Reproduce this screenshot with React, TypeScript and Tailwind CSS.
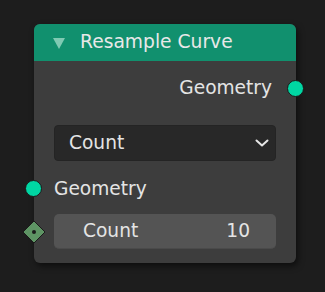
export default function App() {
  return (
    <div
      className="w-[325px] h-[292px] bg-[#1d1d1d] pt-[24px] pl-[34px] overflow-hidden"
      style={{ fontFamily: '"DejaVu Sans", "Liberation Sans", sans-serif' }}
    >
      <div className="relative w-[262px] h-[239px] rounded-[6px] bg-[#3d3d3d] shadow-[2px_3px_6px_rgba(0,0,0,0.55)] flex flex-col">
        {/* header */}
        <div className="h-[37px] rounded-t-[6px] bg-[#11906e] flex items-center pl-[19px] gap-[15px] shrink-0">
          <svg width="12" height="12" viewBox="0 0 12 12">
            <polygon points="0,1 12,1 6,12" fill="#7fcab3" />
          </svg>
          <span className="text-[18.7px] leading-none text-[#e8e8e8] -mt-[1px]">Resample Curve</span>
        </div>

        {/* output socket row */}
        <div className="relative mt-[14px] h-[26px] flex items-center justify-end pr-[24px]">
          <span className="text-[18.6px] leading-none text-[#e4e4e4]">Geometry</span>
          <div className="absolute right-[-8px] top-[5px] w-[17px] h-[17px] rounded-full bg-[#00d6a3] border border-[#1a1a1a]" />
        </div>

        {/* dropdown */}
        <div className="mt-[24px] mx-[20px] h-[36px] rounded-[4px] bg-[#282828] border border-[#242424] flex items-center justify-between pl-[14px] pr-[6px]">
          <span className="text-[18.6px] leading-none text-[#e4e4e4]">Count</span>
          <svg width="14" height="8" viewBox="0 0 14 8">
            <polyline points="1.5,1.5 7,6.5 12.5,1.5" fill="none" stroke="#e6e6e6" strokeWidth="2" strokeLinecap="round" strokeLinejoin="round" />
          </svg>
        </div>

        {/* input socket row */}
        <div className="relative mt-[15px] h-[26px] flex items-center pl-[20px]">
          <span className="text-[18.6px] leading-none text-[#e4e4e4]">Geometry</span>
          <div className="absolute left-[-9px] top-[4px] w-[17px] h-[17px] rounded-full bg-[#00d6a3] border border-[#1a1a1a]" />
        </div>

        {/* count field */}
        <div className="relative mt-[12px] mx-[20px] h-[35px] rounded-[5px] bg-[#545454] border-b border-[#4a4a4a] flex items-center justify-between pl-[29px] pr-[26px]">
          <span className="text-[18.6px] leading-none text-[#e4e4e4]">Count</span>
          <span className="text-[18.6px] leading-none text-[#e4e4e4]">10</span>
          <svg className="absolute left-[-32px] top-[6px]" width="24" height="24" viewBox="0 0 24 24">
            <polygon points="12,1 23,12 12,23 1,12" fill="#5e9464" stroke="#1a1a1a" strokeWidth="1" />
            <circle cx="12" cy="12" r="2" fill="#1a1a1a" />
          </svg>
        </div>
      </div>
    </div>
  );
}
